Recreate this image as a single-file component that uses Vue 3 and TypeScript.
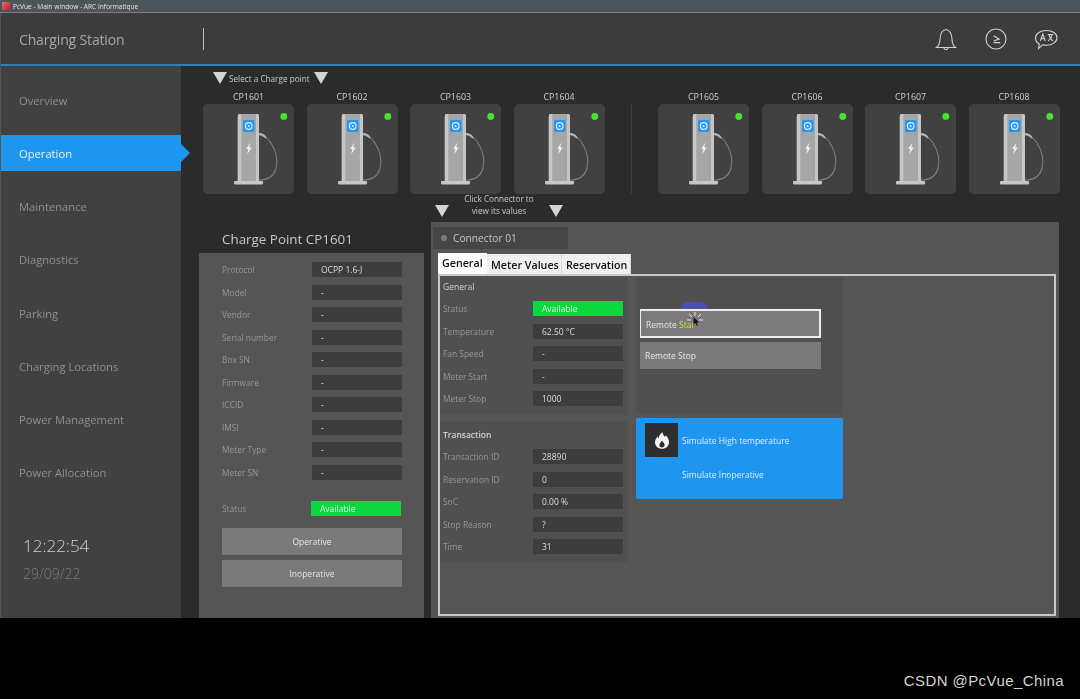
<script setup lang="ts">
const nav: string[] = ['Overview', 'Operation', 'Maintenance', 'Diagnostics', 'Parking', 'Charging Locations', 'Power Management', 'Power Allocation']
const groups: string[][] = [
  ['CP1601', 'CP1602', 'CP1603', 'CP1604'],
  ['CP1605', 'CP1606', 'CP1607', 'CP1608'],
]
const chargeFields: [string, string][] = [
  ['Protocol', 'OCPP 1.6-J'], ['Model', '-'], ['Vendor', '-'], ['Serial number', '-'], ['Box SN', '-'],
  ['Firmware', '-'], ['ICCID', '-'], ['IMSI', '-'], ['Meter Type', '-'], ['Meter SN', '-'],
]
const generalFields: [string, string][] = [
  ['Temperature', '62.50 °C'], ['Fan Speed', '-'], ['Meter Start', '-'], ['Meter Stop', '1000'],
]
const transactionFields: [string, string][] = [
  ['Transaction ID', '28890'], ['Reservation ID', '0'], ['SoC', '0.00 %'], ['Stop Reason', '?'], ['Time', '31'],
]
</script>

<template>
  <div class="root">
    <div class="titlebar">
      <span class="appicon"></span>
      <span>PcVue - Main window - ARC Informatique</span>
    </div>
    <div class="app">
      <header class="header">
        <div class="brand">Charging Station</div>
        <div class="brand-sep"></div>
        <div class="header-icons">
          <svg width="24" height="24" viewBox="0 0 24 24" fill="none" stroke="#d2d2d2" stroke-width="1.1">
            <path d="M2.500 20.500c2.200-1.800 3.200-4 3.400-7.500.2-4.500 1-10 6.100-10.500 5.100.5 5.900 6 6.100 10.500.2 3.500 1.200 5.700 3.400 7.500z" />
            <path d="M9.800 20.700c.3 2.300 4.100 2.300 4.400 0" />
          </svg>
          <svg width="24" height="24" viewBox="0 0 24 24" fill="none" stroke="#d2d2d2" stroke-width="1.100">
            <circle cx="12" cy="12" r="10" />
            <path d="M9.700 8.700l5.300 3.300-5.300 2M9.700 15.600h6.600" stroke-width="1.200" />
          </svg>
          <svg width="24" height="24" viewBox="0 0 24 24" fill="none" stroke="#d2d2d2" stroke-width="1.100">
            <path d="M12.500 3.500c5.800 0 10.500 3 10.500 7.300s-4.700 7.400-10.500 7.400c-1.300 0-2.500-.2-3.600-.5L4.500 21.500l.8-4.600C2.600 15.500 1.500 13.300 1.500 10.800 1.500 6.500 6.700 3.500 12.500 3.500z" />
            <path d="M6.300 14l2.500-6.800L11.300 14M7.200 11.800h3.200M13.800 7.500h5.500M15 7.500c.4 2.600 2.200 5.200 4 6.500M18.200 7.500c-.4 2.600-2.200 5.200-4 6.500" stroke-width="1.100" />
          </svg>
        </div>
      </header>
      <div class="body">
        <aside class="sidebar">
          <nav class="nav">
            <div v-for="item in nav" :key="item" class="nav-item" :class="{ active: item === 'Operation' }">{{ item }}</div>
          </nav>
          <div class="clock">
            <div class="time">12:22:54</div>
            <div class="date">29/09/22</div>
          </div>
        </aside>
        <main class="main">
          <div class="hint-row">
            <span class="tri"></span>
            <span class="hint">Select a Charge point</span>
            <span class="tri"></span>
          </div>
          <div class="cards">
            <template v-for="(group, gi) in groups" :key="gi">
              <div v-if="gi === 1" class="card-sep"></div>
              <div class="card-group">
                <div v-for="cp in group" :key="cp" class="card-col">
                  <div class="card-label">{{ cp }}</div>
                  <div class="card">
                    <svg width="91" height="90" viewBox="0 0 91 90" fill="none">
                      <path d="M56 31c5 .5 9 3 12 8 5 8 7 17 5 25-2 8-7 12-17 12" stroke="#7f7f7f" stroke-width="1.100" />
                      <path d="M56 30c3 0 5 1 7 4" stroke="#b4b4b4" stroke-width="1.800" />
                      <path d="M34.800 12q0-2 2-2h17.200q2 0 2 2v65h-21.200z" fill="#a6a6a6" />
                      <path d="M34.800 12q0-2 2-2h1.500v67h-3.500zM54 10q2 0 2 2v65h-3v-67z" fill="#c6c6c6" />
                      <rect x="31" y="77" width="29" height="3.500" rx="1" fill="#c6c6c6" />
                      <rect x="40" y="16" width="11.500" height="12" rx="1" fill="#2196f3" />
                      <circle cx="45.700" cy="22" r="3.300" stroke="#dff0ff" stroke-width="1.200" />
                      <circle cx="45.700" cy="22" r="1" fill="#dff0ff" />
                      <path d="M47.500 38.500l-4.500 6.500h2.500l-1.500 5.500 4.800-7h-2.600z" fill="#f2f2f2" />
                      <circle cx="80.800" cy="12.400" r="3.400" fill="#3fe82f" />
                    </svg>
                  </div>
                </div>
              </div>
            </template>
          </div>
          <div class="lower">
            <section class="left-col">
              <h2 class="cp-title">Charge Point CP1601</h2>
              <div class="cp-panel">
                <div v-for="f in chargeFields" :key="f[0]" class="cp-row">
                  <span class="lbl">{{ f[0] }}</span>
                  <span class="val">{{ f[1] }}</span>
                </div>
                <div class="cp-row cp-status">
                  <span class="lbl">Status</span>
                  <span class="val ok">Available</span>
                </div>
                <div class="cp-btn">Operative</div>
                <div class="cp-btn second">Inoperative</div>
              </div>
            </section>
            <section class="right-col">
              <div class="conn-hint">
                <span class="tri"></span>
                <span class="hint two">Click Connector to<br />view its values</span>
                <span class="tri"></span>
              </div>
              <div class="conn-panel">
                <div class="conn-head"><span class="dot"></span>Connector 01</div>
                <div class="tabs">
                  <div class="tab selected">General</div>
                  <div class="tab">Meter Values</div>
                  <div class="tab">Reservation</div>
                </div>
                <div class="frame">
                  <div class="frame-left">
                    <div class="group g1">
                      <div class="g-title">General</div>
                      <div class="g-row">
                        <span class="lbl">Status</span>
                        <span class="val ok">Available</span>
                      </div>
                      <div v-for="f in generalFields" :key="f[0]" class="g-row">
                        <span class="lbl">{{ f[0] }}</span>
                        <span class="val">{{ f[1] }}</span>
                      </div>
                    </div>
                    <div class="group g2">
                      <div class="g-title strong">Transaction</div>
                      <div v-for="f in transactionFields" :key="f[0]" class="g-row">
                        <span class="lbl">{{ f[0] }}</span>
                        <span class="val">{{ f[1] }}</span>
                      </div>
                    </div>
                  </div>
                  <div class="frame-right">
                    <div class="actions">
                      <span class="halo"></span>
                      <div class="act-btn focus">Remote <span class="yellow">Star</span></div>
                      <div class="act-btn">Remote Stop</div>
                      <svg class="spinner" width="18" height="18" viewBox="0 0 18 18" fill="none">
                        <path d="M9 1v4M3 3l3 3M15 3l-3 3M1 9h4M13 9h4" stroke="#e6e6e6" stroke-width="1" />
                        <path d="M7.500 6v8l2-2 1.500 3 1-.5-1.400-3h2.600z" fill="#151515" />
                      </svg>
                    </div>
                    <div class="sim">
                      <div class="sim-icon">
                        <svg width="14" height="17" viewBox="0 0 16 19" fill="#f4f4f4">
                          <path fill-rule="evenodd" d="M8.500 0c.6 3 2 4 3.200 5.500.4-.8.5-1.500.4-2.300C14.300 5.300 16 8 16 11.500 16 15.800 12.600 19 8 19s-8-3.200-8-7.500c0-3 1.600-4.700 3-6.500.2 1 .5 1.800 1.100 2.400C4.200 4.500 5.700 1.800 8.500 0zM8 9.500c-.5 1.500-3 2.800-3 5.200C5 16.400 6.400 17.500 8 17.500s3-1.100 3-2.800c0-2.400-2.500-3.700-3-5.200z" />
                        </svg>
                      </div>
                      <div class="sim-texts">
                        <div>Simulate High temperature</div>
                        <div>Simulate Inoperative</div>
                      </div>
                    </div>
                  </div>
                </div>
              </div>
            </section>
          </div>
        </main>
      </div>
    </div>
    <footer class="footer">CSDN @PcVue_China</footer>
  </div>
</template>

<style>
html, body { margin: 0; background: #000; }
</style>

<style scoped>
.root {
  width: 1080px;
  height: 699px;
  background: #000;
  overflow: hidden;
  display: flex;
  flex-direction: column;
  font-family: "Open Sans", "Noto Sans", sans-serif;
  color: #ddd;
}
.titlebar {
  height: 13px;
  flex: none;
  background: #4b555b;
  border-bottom: 1px solid #7a7f82;
  box-sizing: border-box;
  display: flex;
  align-items: center;
  gap: 3px;
  padding-left: 2px;
  font-size: 6.600px;
  color: #e6e6e6;
  filter: blur(0.35px);
}
.appicon {
  width: 8px;
  height: 8px;
  background: linear-gradient(135deg, #f06a6a, #b81c1c);
  border-radius: 1px;
}
.app {
  height: 605px;
  flex: none;
  display: flex;
  flex-direction: column;
  border-left: 1px solid #555;
  box-sizing: border-box;
  filter: blur(0.35px);
}
.header {
  height: 53px;
  flex: none;
  box-sizing: border-box;
  background: #3c3c3c;
  border-bottom: 2px solid #2f7fb8;
  display: flex;
  align-items: center;
  padding-left: 18px;
}
.brand {
  width: 184px;
  padding-top: 2px;
  font-size: 14px;
  letter-spacing: -0.15px;
  color: #a8a8a8;
}
.brand-sep {
  width: 1px;
  height: 22px;
  background: #bdbdbd;
}
.header-icons {
  margin-left: auto;
  margin-right: 22px;
  display: flex;
  align-items: center;
  gap: 26px;
}
.body {
  flex: 1;
  min-height: 0;
  display: flex;
}
.sidebar {
  width: 180px;
  flex: none;
  background: #414141;
  display: flex;
  flex-direction: column;
}
.nav {
  padding-top: 16px;
  display: flex;
  flex-direction: column;
  gap: 17.140px;
}
.nav-item {
  height: 36px;
  line-height: 37px;
  padding-left: 18px;
  font-size: 11.200px;
  color: #8f8f8f;
  position: relative;
}
.nav-item.active {
  background: #1e96f0;
  color: #f0f0f0;
}
.nav-item.active::after {
  content: "";
  position: absolute;
  left: 100%;
  top: 9px;
  border-left: 9px solid #1e96f0;
  border-top: 9px solid transparent;
  border-bottom: 9px solid transparent;
}
.clock {
  margin-top: 44px;
  padding-left: 22px;
}
.time {
  font-size: 17px;
  font-weight: 300;
  line-height: 24px;
  color: #d0d0d0;
}
.date {
  margin-top: 7px;
  font-size: 14px;
  font-weight: 300;
  line-height: 18px;
  color: #7a7a7a;
}
.main {
  flex: 1;
  min-width: 0;
  background: #2b2b2b;
  display: flex;
  flex-direction: column;
}
.hint-row {
  height: 24px;
  flex: none;
  display: flex;
  align-items: center;
  padding-left: 32px;
  gap: 2px;
}
.tri {
  width: 0;
  height: 0;
  flex: none;
  border-left: 7px solid transparent;
  border-right: 7px solid transparent;
  border-top: 12px solid #d4d4d4;
}
.hint {
  font-size: 8.200px;
  color: #c8c8c8;
  white-space: nowrap;
  padding: 0 2px 0 0;
}
.cards {
  flex: none;
  display: flex;
  align-items: flex-end;
  padding-left: 22px;
}
.card-group {
  display: flex;
  gap: 12.500px;
}
.card-sep {
  width: 1px;
  height: 90px;
  margin: 0 26.500px 0 26px;
  background: #3f3f3f;
}
.card-label {
  height: 14px;
  line-height: 15px;
  text-align: center;
  font-size: 8.800px;
  color: #cfcfcf;
}
.card {
  width: 91px;
  height: 90px;
  background: #414141;
  border-radius: 5px;
}
.card svg { display: block; }
.lower {
  flex: 1;
  min-height: 0;
  display: flex;
  gap: 7px;
  padding-left: 18px;
}
.left-col {
  width: 225px;
  flex: none;
  display: flex;
  flex-direction: column;
}
.cp-title {
  margin: 0;
  height: 59px;
  box-sizing: border-box;
  padding: 35px 0 0 23px;
  font-weight: 400;
  font-size: 13.400px;
  line-height: 20px;
  color: #c8c8c8;
}
.cp-panel {
  flex: 1;
  background: #555;
  padding: 9px 22px 0 23px;
  display: flex;
  flex-direction: column;
}
.cp-row {
  display: flex;
  align-items: center;
  justify-content: space-between;
  height: 15px;
  margin-bottom: 7.500px;
}
.cp-status {
  margin-top: 14px;
  margin-bottom: 12px;
  padding-right: 1px;
}
.lbl {
  font-size: 8.400px;
  color: #979797;
}
.val {
  width: 90px;
  height: 15px;
  line-height: 15px;
  box-sizing: border-box;
  padding-left: 9px;
  background: #3d3d3d;
  font-size: 8.500px;
  color: #dcdcdc;
}
.val.ok {
  background: #0ad83e;
  color: #d8f7e0;
}
.cp-btn {
  height: 27px;
  line-height: 27px;
  text-align: center;
  background: #7a7a7a;
  font-size: 8.500px;
  color: #e6e6e6;
}
.cp-btn.second {
  margin-top: 5px;
}
.right-col {
  flex: 1;
  min-width: 0;
  display: flex;
  flex-direction: column;
  margin-right: 21px;
}
.conn-hint {
  height: 28px;
  flex: none;
  display: flex;
  align-items: flex-end;
  padding: 0 0 5px 4px;
  box-sizing: border-box;
}
.hint.two {
  width: 100px;
  text-align: center;
  line-height: 12px;
  padding: 0;
  margin-bottom: 0;
  align-self: flex-start;
  margin-top: -1px;
}
.conn-panel {
  flex: 1;
  min-height: 0;
  background: #555;
  padding: 5px 3px 2px 2px;
  display: flex;
  flex-direction: column;
}
.conn-head {
  width: 135px;
  height: 22px;
  flex: none;
  background: #454545;
  display: flex;
  align-items: center;
  gap: 6px;
  padding-left: 8px;
  box-sizing: border-box;
  font-size: 10.200px;
  color: #c6c6c6;
}
.dot {
  width: 6px;
  height: 6px;
  border-radius: 50%;
  background: #7d7d7d;
}
.tabs {
  margin: 4px 0 0 5px;
  height: 21px;
  flex: none;
  display: flex;
  align-items: flex-end;
}
.tab {
  height: 20px;
  line-height: 22px;
  padding: 0 4px;
  background: #f0f0f0;
  color: #111;
  font-size: 10.700px;
  font-weight: 600;
  border-right: 1px solid #d8d8d8;
  white-space: nowrap;
}
.tab:nth-child(2) { width: 75px; box-sizing: border-box; }
.tab:nth-child(3) { width: 69px; box-sizing: border-box; }
.tab.selected {
  width: 49px;
  box-sizing: border-box;
  height: 21px;
  background: #fff;
  border-right: 0;
  line-height: 21px;
}
.frame {
  flex: 1;
  min-height: 0;
  margin-left: 5px;
  box-sizing: border-box;
  border: 2px solid #c8c8c8;
  display: flex;
  gap: 8px;
  padding: 1px 0 0 0;
}
.frame-left {
  width: 188px;
  flex: none;
  display: flex;
  flex-direction: column;
  gap: 6px;
}
.group {
  background: #505050;
  padding: 3px 5px 0 3px;
  box-sizing: border-box;
}
.g1 { height: 138px; }
.g2 { height: 141px; padding-top: 7px; }
.g-title {
  height: 18px;
  line-height: 14px;
  font-size: 8.500px;
  color: #d2d2d2;
  margin-bottom: 3px;
}
.g-title.strong { font-weight: 600; }
.g-row {
  display: flex;
  align-items: center;
  justify-content: space-between;
  height: 15px;
  margin-bottom: 7.500px;
}
.frame-right {
  width: 207px;
  flex: none;
  display: flex;
  flex-direction: column;
  gap: 4px;
}
.actions {
  height: 137px;
  background: #505050;
  position: relative;
  padding: 32px 22px 0 4px;
  box-sizing: border-box;
  display: flex;
  flex-direction: column;
  gap: 4px;
}
.halo {
  position: absolute;
  left: 44px;
  top: 25px;
  width: 28px;
  height: 8px;
  background: #4a4fb0;
  border-radius: 14px 14px 0 0;
}
.act-btn {
  position: relative;
  height: 27px;
  line-height: 27px;
  padding-left: 5px;
  background: #7a7a7a;
  font-size: 8.500px;
  color: #e6e6e6;
}
.act-btn.focus {
  height: 29px;
  line-height: 28px;
  box-sizing: border-box;
  border: 2px solid #eee;
  border-left-width: 1px;
  padding-left: 5px;
  background: #7c7c7c;
}
.yellow { color: #dcdc3c; }
.spinner {
  position: absolute;
  left: 50px;
  top: 34px;
}
.sim {
  height: 81px;
  background: #1e96f0;
  border-radius: 2px;
  display: flex;
  padding: 5px 0 0 9px;
  box-sizing: border-box;
  gap: 4px;
}
.sim-icon {
  width: 33px;
  height: 34px;
  background: #2e2e2e;
  display: flex;
  align-items: center;
  justify-content: center;
}
.sim-texts {
  display: flex;
  flex-direction: column;
  gap: 22px;
  padding-top: 12px;
  font-size: 8.500px;
  line-height: 12px;
  color: #d6ecfd;
}
.footer {
  flex: 1;
  display: flex;
  align-items: flex-end;
  justify-content: flex-end;
  padding: 0 16px 10px 0;
  font-family: "Liberation Sans", sans-serif;
  font-size: 15px;
  letter-spacing: 0.42px;
  color: #d4d4d4;
}
</style>
